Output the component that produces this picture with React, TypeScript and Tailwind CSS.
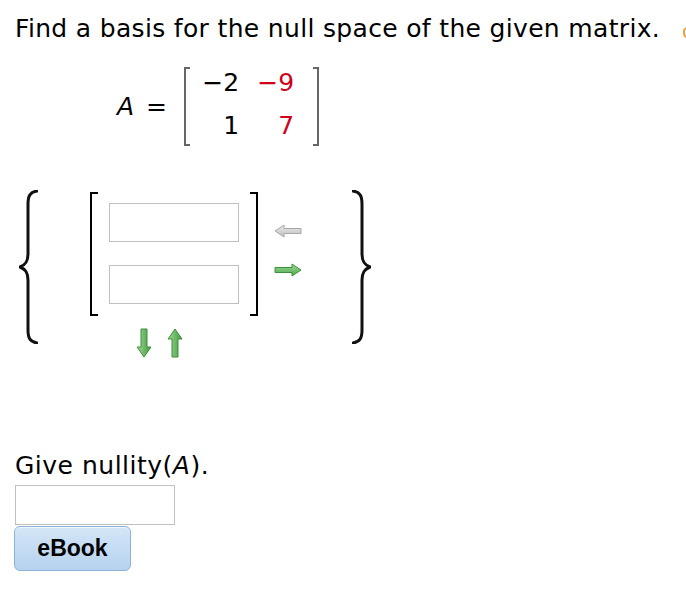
import React from 'react';

const font = { fontFamily: '"DejaVu Sans", Verdana, sans-serif' };

const Brace: React.FC<{ flip?: boolean }> = ({ flip }) => (
    <svg width="19" height="154" viewBox="0 0 19 154" className={flip ? 'scale-x-[-1]' : ''}>
        <path
            d="M18 1 C11 2 9 6 9 14 L9 64 C9 72 6 75 1 77 C6 79 9 82 9 90 L9 140 C9 148 11 152 18 153"
            fill="none"
            stroke="#111"
            strokeWidth="3"
            strokeLinecap="round"
        />
    </svg>
);

const SideArrow: React.FC<{ dir: 'left' | 'right' }> = ({ dir }) => {
    const green = dir === 'right';
    return (
        <svg width="28" height="14" viewBox="0 0 28 14" className={green ? '' : 'scale-x-[-1]'}>
            <defs>
                <linearGradient id={green ? 'ga' : 'gg'} x1="0" y1="0" x2="0" y2="1">
                    <stop offset="0" stopColor={green ? '#9fd89a' : '#ececec'} />
                    <stop offset="1" stopColor={green ? '#4fa84a' : '#bdbdbd'} />
                </linearGradient>
            </defs>
            <path
                d="M1 4.5 L18 4.5 L18 1 L27 7 L18 13 L18 9.5 L1 9.5 Z"
                fill={`url(#${green ? 'ga' : 'gg'})`}
                stroke={green ? '#3f8f3a' : '#a8a8a8'}
                strokeWidth="1"
                strokeLinejoin="round"
            />
        </svg>
    );
};

const VertArrow: React.FC<{ up?: boolean }> = ({ up }) => (
    <svg width="16" height="30" viewBox="0 0 16 30" className={up ? 'scale-y-[-1]' : ''}>
        <defs>
            <linearGradient id="va" x1="0" y1="0" x2="1" y2="0">
                <stop offset="0" stopColor="#9fd89a" />
                <stop offset="1" stopColor="#3f9a3a" />
            </linearGradient>
        </defs>
        <path
            d="M5 1 L11 1 L11 19 L15 19 L8 29 L1 19 L5 19 Z"
            fill="url(#va)"
            stroke="#3f8f3a"
            strokeWidth="1"
            strokeLinejoin="round"
        />
    </svg>
);

export default function App() {
    return (
        <div className="w-[686px] h-[596px] bg-white text-black overflow-hidden relative" style={font}>
            <div className="pl-[15px] pt-[15px]">
                <p className="text-[25px] leading-[28px] tracking-[0.33px] whitespace-nowrap">
                    Find a basis for the null space of the given matrix.
                </p>
                <span className="absolute right-[-6px] top-[27px] w-[9px] h-[11px] rounded-full border-2 border-[#e8a040]" />

                <div className="flex items-center mt-[24px] ml-[102px]">
                    <span className="text-[25px] italic">A</span>
                    <span className="text-[25px] ml-[12px]">=</span>
                    <div className="flex items-stretch ml-[17px] h-[79px]">
                        <div className="w-[6px] border-l-2 border-t-2 border-b-2 border-[#666]" />
                        <div className="grid grid-cols-[47px_55px] grid-rows-[32px_40px] gap-y-[7px] items-center text-[25px] leading-[28px] pl-[2px]">
                            <span className="text-right">−2</span>
                            <span className="text-right text-[#d0021b]">−9</span>
                            <span className="text-right">1</span>
                            <span className="text-right text-[#d0021b]">7</span>
                        </div>
                        <div className="w-[6px] border-r-2 border-t-2 border-b-2 border-[#666] ml-[19px]" />
                    </div>
                </div>

                <div className="flex items-start mt-[44px] ml-[4px]">
                    <Brace />
                    <div className="ml-[52px] mt-[2px] flex flex-col">
                        <div className="flex items-stretch h-[124px]">
                            <div className="w-[8px] border-l-2 border-t-2 border-b-2 border-black" />
                            <div className="flex flex-col gap-[23px] py-[11px] ml-[11px]">
                                <input className="w-[130px] h-[39px] border border-[#c0c0c0] outline-none" />
                                <input className="w-[130px] h-[39px] border border-[#c0c0c0] outline-none" />
                            </div>
                            <div className="w-[8px] border-r-2 border-t-2 border-b-2 border-black ml-[11px]" />
                        </div>
                        <div className="flex gap-[15px] ml-[46px] mt-[12px]">
                            <VertArrow />
                            <VertArrow up />
                        </div>
                    </div>
                    <div className="flex flex-col gap-[25px] ml-[16px] mt-[34px]">
                        <SideArrow dir="left" />
                        <SideArrow dir="right" />
                    </div>
                    <div className="ml-[50px]">
                        <Brace flip />
                    </div>
                </div>

                <p className="text-[25px] leading-[28px] tracking-[0.5px] mt-[94px]">
                    Give nullity(<span className="italic">A</span>).
                </p>
                <input className="block w-[160px] h-[40px] border border-[#c0c0c0] outline-none mt-[5px]" />
                <button
                    className="block mt-[1px] -ml-[1px] w-[117px] h-[45px] rounded-[6px] border border-[#8db2d8] bg-gradient-to-b from-[#d4e6f8] to-[#b6d2ef] shadow-[inset_0_1px_0_#eef5fc] text-[23px] font-bold text-black"
                    style={{ fontFamily: '"Liberation Sans", Arial, sans-serif' }}
                >
                    eBook
                </button>
            </div>
        </div>
    );
}
